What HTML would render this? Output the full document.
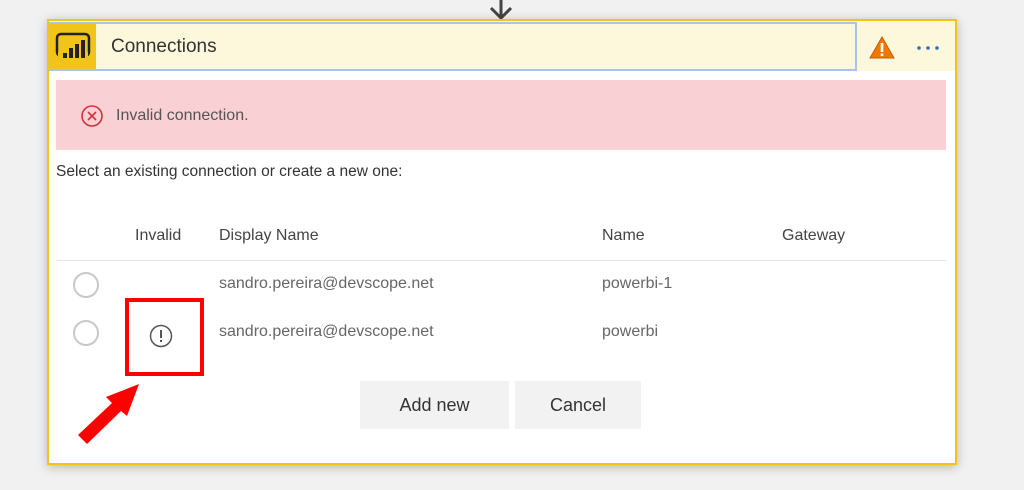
<!DOCTYPE html>
<html><head><meta charset="utf-8"><style>
*{margin:0;padding:0;box-sizing:border-box}
body{width:1024px;height:490px;background:#f1f1f1;position:relative;overflow:hidden;font-family:"Liberation Sans",sans-serif;color:#333}
.a{position:absolute}
.card{left:47px;top:19px;width:910px;height:446px;border:2px solid #f0c419;background:#fff;box-shadow:0 2px 10px rgba(0,0,0,.25)}
.t{position:absolute;white-space:nowrap}
.radio{position:absolute;width:26px;height:26px;border:2px solid #c8c8c8;border-radius:50%}
.btn{position:absolute;background:#f2f2f2;font-size:18px;color:#333;text-align:center;line-height:48px;height:48px;top:381px}
</style></head><body>
<svg class="a" style="left:486px;top:0" width="30" height="20"><path d="M15 0V17M5 8L15 18L25 8" stroke="#444" stroke-width="3" fill="none"/></svg>
<div class="a card"></div>
<div class="a" style="left:49px;top:21px;width:906px;height:50px;background:#fdf7dc"></div>
<div class="a" style="left:49px;top:22px;width:808px;height:49px;border:2px solid #a6c4ec"></div>
<div class="a" style="left:50px;top:23px;width:46px;height:46px;background:#f0c419"></div>
<svg class="a" style="left:55px;top:32px" width="36" height="30"><rect x="2" y="2" width="32" height="22" rx="4" fill="none" stroke="#222" stroke-width="2.5"/><rect x="3" y="20" width="30" height="8" fill="#f0c419"/><rect x="8" y="21" width="4" height="5" fill="#222"/><rect x="14" y="16" width="4" height="10" fill="#222"/><rect x="20" y="12" width="4" height="14" fill="#222"/><rect x="26" y="8" width="4" height="18" fill="#222"/></svg>
<div class="t" style="left:111px;top:36px;font-size:19px;color:#333">Connections</div>
<svg class="a" style="left:869px;top:36px" width="26" height="23"><path d="M13 1L25 22H1Z" fill="#f07800" stroke="#c85f00" stroke-width="1"/><rect x="11.7" y="7" width="2.6" height="9" fill="#fff"/><rect x="11.7" y="17.5" width="2.6" height="2.6" fill="#fff"/></svg>
<svg class="a" style="left:915px;top:44px" width="30" height="8"><circle cx="4" cy="4" r="1.8" fill="#2f6fb8"/><circle cx="13" cy="4" r="1.8" fill="#2f6fb8"/><circle cx="22" cy="4" r="1.8" fill="#2f6fb8"/></svg>
<div class="a" style="left:56px;top:80px;width:890px;height:70px;background:#f9d0d4"></div>
<svg class="a" style="left:80px;top:104px" width="24" height="24"><circle cx="12" cy="12" r="10" fill="none" stroke="#d0343c" stroke-width="1.6"/><path d="M8 8L16 16M16 8L8 16" stroke="#d0343c" stroke-width="1.6"/></svg>
<div class="t" style="left:116px;top:107px;font-size:16px;color:#555">Invalid connection.</div>
<div class="t" style="left:56px;top:163px;font-size:15.5px;color:#333">Select an existing connection or create a new one:</div>
<div class="t" style="left:135px;top:227px;font-size:16px;color:#444">Invalid</div>
<div class="t" style="left:219px;top:227px;font-size:16px;color:#444">Display Name</div>
<div class="t" style="left:602px;top:227px;font-size:16px;color:#444">Name</div>
<div class="t" style="left:782px;top:227px;font-size:16px;color:#444">Gateway</div>
<div class="a" style="left:57px;top:260px;width:889px;height:1px;background:#e4e4e4"></div>
<div class="radio" style="left:73px;top:272px"></div>
<div class="radio" style="left:73px;top:320px"></div>
<div class="t" style="left:219px;top:275px;font-size:16px;color:#666">sandro.pereira@devscope.net</div>
<div class="t" style="left:602px;top:275px;font-size:16px;color:#666">powerbi-1</div>
<div class="t" style="left:219px;top:323px;font-size:16px;color:#666">sandro.pereira@devscope.net</div>
<div class="t" style="left:602px;top:323px;font-size:16px;color:#666">powerbi</div>
<svg class="a" style="left:149px;top:324px" width="24" height="24"><circle cx="12" cy="12" r="10.5" fill="none" stroke="#555" stroke-width="1.5"/><rect x="11" y="6" width="2" height="8" fill="#555"/><rect x="11" y="16" width="2" height="2" fill="#555"/></svg>
<div class="a" style="left:125px;top:298px;width:79px;height:78px;border:4px solid #ff0000"></div>
<svg class="a" style="left:75px;top:380px" width="70" height="70"><path d="M3 55L37 23L31 17L64 4L52 36L46 31L12 64Z" fill="#ff0000"/></svg>
<div class="btn" style="left:360px;width:149px">Add new</div>
<div class="btn" style="left:515px;width:126px">Cancel</div>
</body></html>
